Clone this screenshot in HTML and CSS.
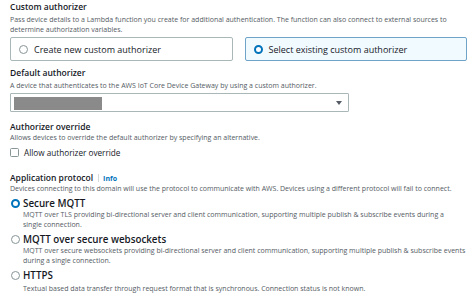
FILE: index.html
```html
<!DOCTYPE html>
<html>
    <head>
        <title>Authorizer settings</title>
        <link rel="stylesheet" href="styles.css">
    </head>
    <body>
        <div class="form">

            <div class="field">
                <p class="label">Custom authorizer</p>
                <p class="hint">Pass device details to a Lambda function you create for additional authentication. The function can also connect to external sources to determine authorization variables.</p>
                <div class="tiles">
                    <div class="tile">
                        <span class="radio"></span>
                        Create new custom authorizer
                    </div>
                    <div class="tile tile-selected">
                        <span class="radio radio-checked"></span>
                        Select existing custom authorizer
                    </div>
                </div>
            </div>

            <div class="field field-default">
                <p class="label">Default authorizer</p>
                <p class="hint">A device that authenticates to the AWS IoT Core Device Gateway by using a custom authorizer.</p>
                <div class="select">
                    <span class="select-value"></span>
                    <span class="select-arrow"></span>
                </div>
            </div>

            <div class="field field-override">
                <p class="label">Authorizer override</p>
                <p class="hint hint-tight">Allows devices to override the default authorizer by specifying an alternative.</p>
                <label class="check-row">
                    <span class="checkbox"></span>
                    Allow authorizer override
                </label>
            </div>

            <div class="field field-protocol">
                <p class="label label-tight">Application protocol<span class="divider"></span><a class="info">Info</a></p>
                <p class="hint hint-tight">Devices connecting to this domain will use the protocol to communicate with AWS. Devices using a different protocol will fail to connect.</p>

                <div class="option">
                    <div class="option-title">
                        <span class="radio radio-checked"></span>
                        Secure MQTT
                    </div>
                    <p class="option-hint">MQTT over TLS providing bi-directional server and client communication, supporting multiple publish &amp; subscribe events during a<br>single connection.</p>
                </div>

                <div class="option">
                    <div class="option-title">
                        <span class="radio"></span>
                        MQTT over secure websockets
                    </div>
                    <p class="option-hint">MQTT over secure websockets providing bi-directional server and client communication, supporting multiple publish &amp; subscribe events<br>during a single connection.</p>
                </div>

                <div class="option option-last">
                    <div class="option-title">
                        <span class="radio"></span>
                        HTTPS
                    </div>
                    <p class="option-hint">Textual based data transfer through request format that is synchronous. Connection status is not known.</p>
                </div>
            </div>

        </div>
    </body>
</html>
```

FILE: styles.css
```css
body {
    margin: 0;
    padding: 1px 7px 0 10px;
    background: white;
    color: #16191f;
    font-family: "Open Sans", "Noto Sans", sans-serif;
}

p {
    margin: 0;
}

.label {
    font-size: 8.5px;
    line-height: 12px;
    font-weight: 600;
}

.label-tight {
    line-height: 11px;
}

.hint {
    margin-top: 2px;
    font-size: 7px;
    line-height: 10px;
    color: #545b64;
}

.hint-tight {
    margin-top: 0;
}

.tiles {
    display: grid;
    grid-template-columns: 1fr 1fr;
    gap: 12px;
    margin-top: 2px;
}

.tile {
    display: flex;
    align-items: center;
    gap: 6px;
    height: 24px;
    box-sizing: border-box;
    padding-left: 8px;
    border: 1px solid #aab7b8;
    border-radius: 2px;
    font-size: 9px;
}

.tile-selected {
    background-color: #f1faff;
    border-color: #6fa3c7;
}

.radio {
    width: 9px;
    height: 9px;
    box-sizing: border-box;
    border: 1px solid #879596;
    border-radius: 50%;
    background: white;
    flex-shrink: 0;
}

.radio-checked {
    border: 2.5px solid #0073bb;
}

.field-default {
    margin-top: 6px;
}

.select {
    display: flex;
    align-items: center;
    justify-content: space-between;
    width: 339px;
    height: 19px;
    box-sizing: border-box;
    margin-top: 2px;
    padding: 1px 6px 0 3px;
    border: 1px solid #aab7b8;
    border-radius: 1px;
}

.select-value {
    width: 88px;
    height: 13px;
    background-color: #8a8a8a;
}

.select-arrow {
    border-left: 3.5px solid transparent;
    border-right: 3.5px solid transparent;
    border-top: 4px solid #545b64;
}

.field-override {
    margin-top: 9px;
}

.check-row {
    display: flex;
    align-items: center;
    gap: 5px;
    margin-top: 3px;
    height: 12px;
    font-size: 8.2px;
}

.checkbox {
    width: 9px;
    height: 9px;
    box-sizing: border-box;
    border: 1px solid #879596;
    border-radius: 1.5px;
}

.field-protocol {
    margin-top: 14px;
}

.divider {
    display: inline-block;
    width: 1px;
    height: 8px;
    margin: 0 4px 0 5px;
    background-color: #d5dbdb;
    vertical-align: -1px;
}

.info {
    font-size: 7px;
    font-weight: 700;
    color: #0073bb;
}

.option {
    margin-top: 3px;
}

.option-title {
    display: flex;
    align-items: center;
    gap: 3px;
    height: 12px;
    padding-left: 1px;
    font-size: 9.8px;
    font-weight: 600;
}

.option-hint {
    margin-top: 1px;
    padding-left: 13px;
    font-size: 7px;
    line-height: 10px;
    color: #545b64;
}

.option + .option {
    margin-top: 3px;
}

.option-last {
    margin-top: 4px;
}

.option-last .option-hint {
    margin-top: 3px;
}
```
